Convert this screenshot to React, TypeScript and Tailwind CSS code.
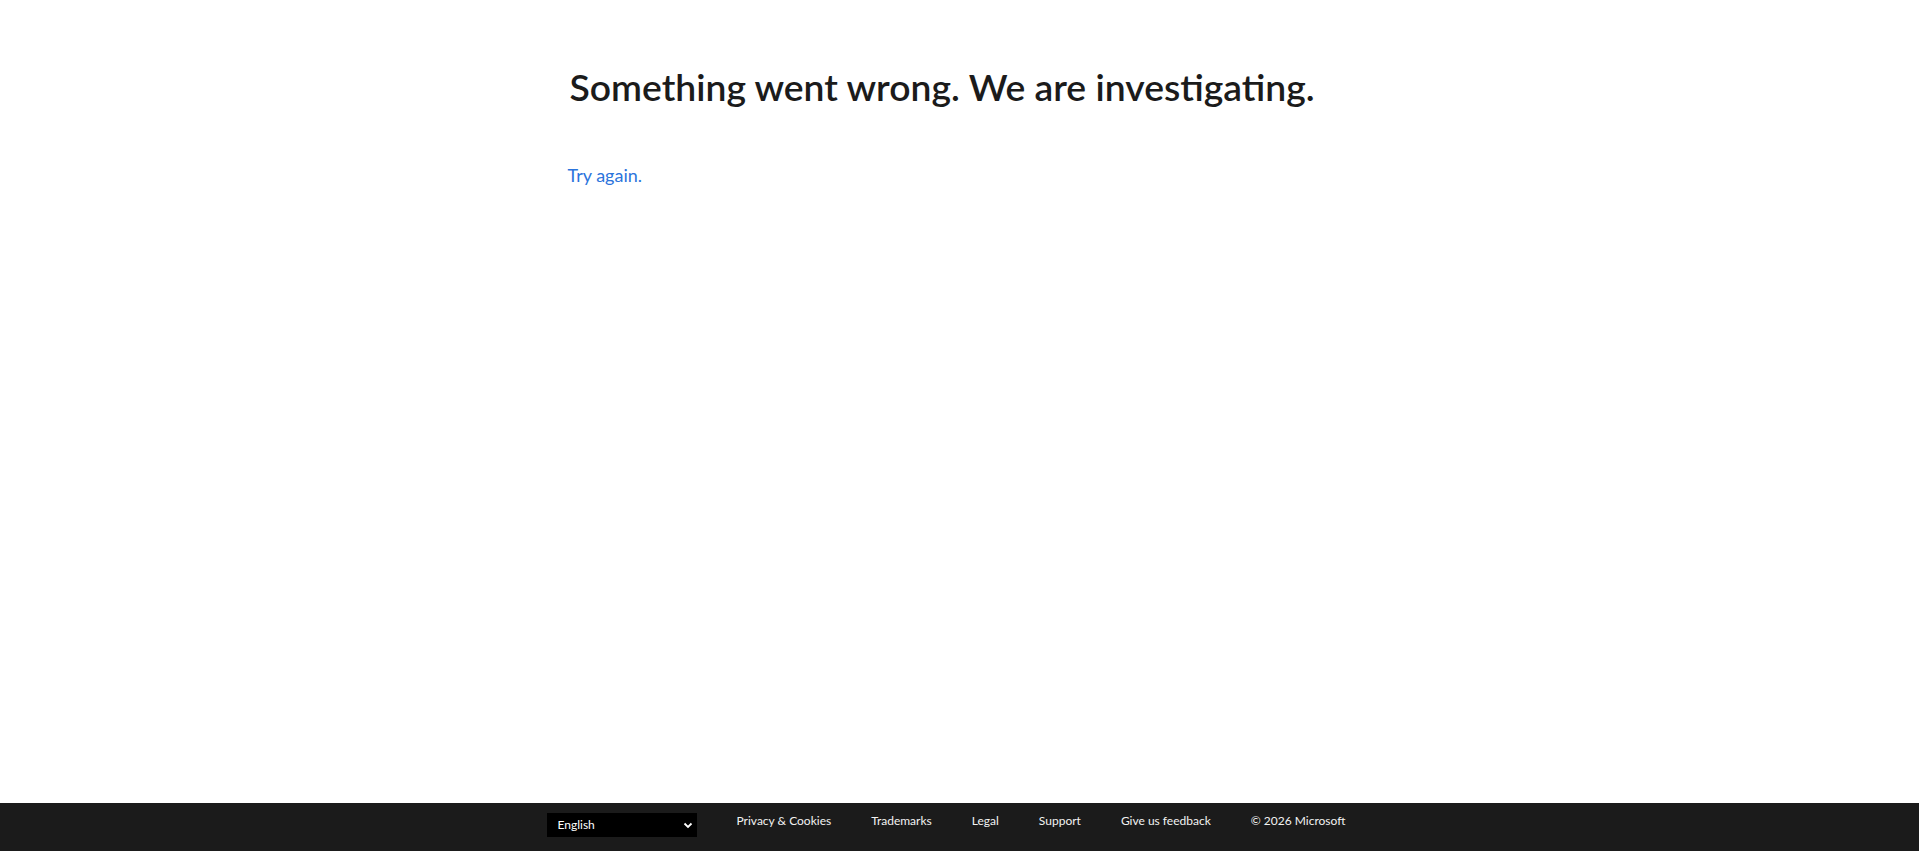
import React from "react";

const links = ["Privacy & Cookies", "Trademarks", "Legal", "Support", "Give us feedback"];

const App = () => {
  return (
    <div className="min-h-screen flex flex-col bg-white font-['Lato',sans-serif]">
      <main className="flex-1 w-[826px] mx-auto">
        <h1 className="pl-[23px] pt-[63px] whitespace-nowrap text-[37.3px] leading-[48px] font-semibold text-[#1b1b1b]">
          Something went wrong. We are investigating.
        </h1>
        <a href="#" className="block mt-[52px] pl-[21px] text-[18px] leading-[24px] text-[#2b74dc]">
          Try again.
        </a>
      </main>

      {/* Footer */}
      <footer className="h-[48px] bg-[#1b1b1b]">
        <div className="w-[826px] mx-auto pt-[9px] flex items-start gap-10 whitespace-nowrap">
          <div className="shrink-0 w-[150px] h-[24px] mt-[1px] bg-black flex items-center justify-between pl-[11px] pr-[3px] text-[12px] text-white">
            <span>English</span>
            <svg width="12" height="12" viewBox="0 0 12 12" fill="none">
              <path d="M2.5 4.5 L6 8 L9.5 4.5" stroke="white" strokeWidth="1.8" />
            </svg>
          </div>
          {links.map((l) => (
            <a key={l} href="#" className="text-[12px] leading-[18px] text-[#f2f2f2]">
              {l}
            </a>
          ))}
          <span className="text-[12px] leading-[18px] text-[#f2f2f2]">© 2026 Microsoft</span>
        </div>
      </footer>
    </div>
  );
};

export default App;
